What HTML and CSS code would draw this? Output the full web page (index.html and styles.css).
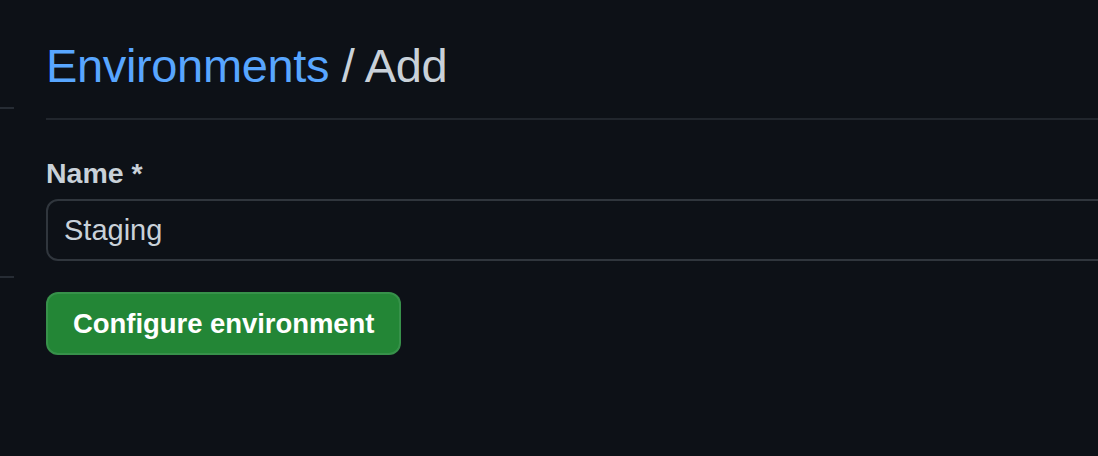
FILE: index.html
```html
<!DOCTYPE html>
<html lang="en">
<head>
<meta charset="utf-8">
<title>Environments / Add</title>
<link rel="stylesheet" href="styles.css">
</head>
<body>
<div class="layout">
  <aside class="sidebar">
    <div class="menu"></div>
  </aside>
  <main class="main">
    <div class="subhead">
      <h1 class="subhead-heading"><a class="crumb" href="#">Environments</a> / Add</h1>
    </div>
    <form class="form">
      <div class="form-group">
        <label class="label" for="name">Name *</label>
        <input class="input" id="name" type="text" value="Staging">
      </div>
      <button class="btn-primary" type="button">Configure environment</button>
    </form>
  </main>
</div>
</body>
</html>
```

FILE: styles.css
```css
html, body {
  margin: 0;
  padding: 0;
  background: #0d1117;
  overflow: hidden;
  font-family: "Liberation Sans", Arial, sans-serif;
  color: #c9d1d9;
}

.layout {
  display: flex;
  width: 100vw;
  height: 456px;
  overflow: hidden;
}

.sidebar {
  width: 14px;
  flex: none;
  padding-top: 107px;
}

.menu {
  height: 167px;
  border-top: 2px solid #262c34;
  border-bottom: 2px solid #262c34;
}

.main {
  flex: none;
  width: 1300px;
  margin-left: 32px;
}

.subhead {
  padding-top: 30px;
  padding-bottom: 16px;
  border-bottom: 2px solid #21262d;
}

.subhead-heading {
  margin: 0;
  font-size: 47px;
  font-weight: 400;
  line-height: 72px;
  color: #c9d1d9;
  letter-spacing: -0.35px;
}

.crumb {
  color: #58a6ff;
  text-decoration: none;
}

.form {
  padding-top: 32px;
}

.form-group {
  display: flex;
  flex-direction: column;
}

.label {
  font-size: 28.5px;
  font-weight: 700;
  line-height: 42px;
  margin-bottom: 5px;
  color: #c9d1d9;
}

.input {
  box-sizing: border-box;
  height: 62px;
  padding: 0 16px;
  font-family: "Liberation Sans", Arial, sans-serif;
  font-size: 29px;
  color: #c9d1d9;
  background: #0d1117;
  border: 2px solid #30363d;
  border-radius: 12px;
  outline: none;
}

.btn-primary {
  box-sizing: border-box;
  margin-top: 31px;
  height: 63px;
  padding: 0 25px;
  font-family: "Liberation Sans", Arial, sans-serif;
  font-size: 27.5px;
  font-weight: 700;
  color: #ffffff;
  background: #238636;
  border: 2px solid rgba(240, 246, 252, 0.1);
  border-radius: 12px;
  cursor: pointer;
  letter-spacing: -0.05px;
}
```
